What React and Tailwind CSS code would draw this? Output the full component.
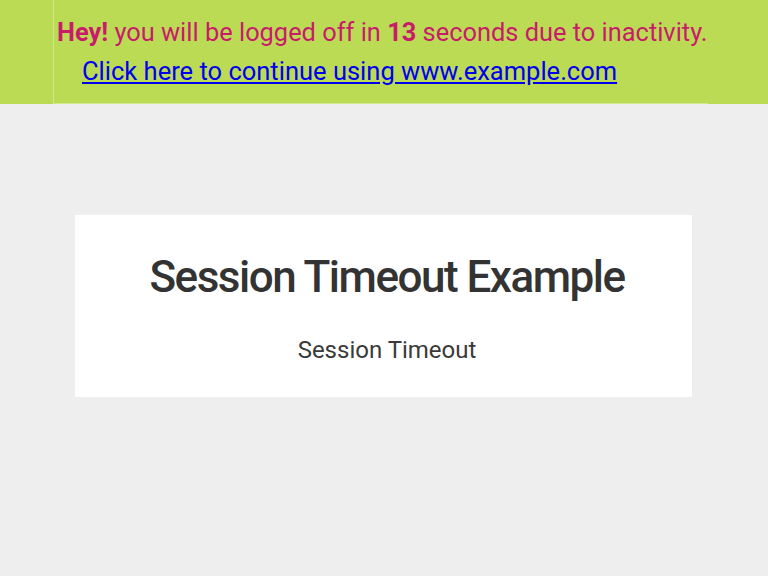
export default function App() {
  const seconds = 13

  return (
    <div className="min-h-[576px] bg-[#eeeeee] font-['Roboto',sans-serif]">
      {/* inactivity warning banner */}
      <div className="h-[104px] bg-[#bcdb55]">
        <div className="ml-[53px] mr-[60px] h-[104px] border-l border-b border-[#d2e88c] pt-[17px] pl-[3px]">
          <p className="text-[25.4px] leading-[30px] text-[#c81b6a] whitespace-nowrap">
            <b className="font-bold">Hey!</b> you will be logged off in <b className="font-bold">{seconds}</b> seconds due to inactivity.
          </p>
          <a href="#" className="mt-[9px] ml-[25px] block text-[25.5px] leading-[30px] text-[#0000ee] underline whitespace-nowrap">
            Click here to continue using www.example.com
          </a>
        </div>
      </div>

      <div className="pt-[111px] px-[75px] pr-[76px]">
        <div className="bg-white h-[182px] flex flex-col items-center pt-[36px] pl-[7px]">
          <h1 className="text-[44px] leading-[52px] font-medium text-[#333333] tracking-[-1.5px]">Session Timeout Example</h1>
          <p className="mt-[33px] text-[24px] leading-[28px] text-[#3a3a3a]">Session Timeout</p>
        </div>
      </div>
    </div>
  )
}
